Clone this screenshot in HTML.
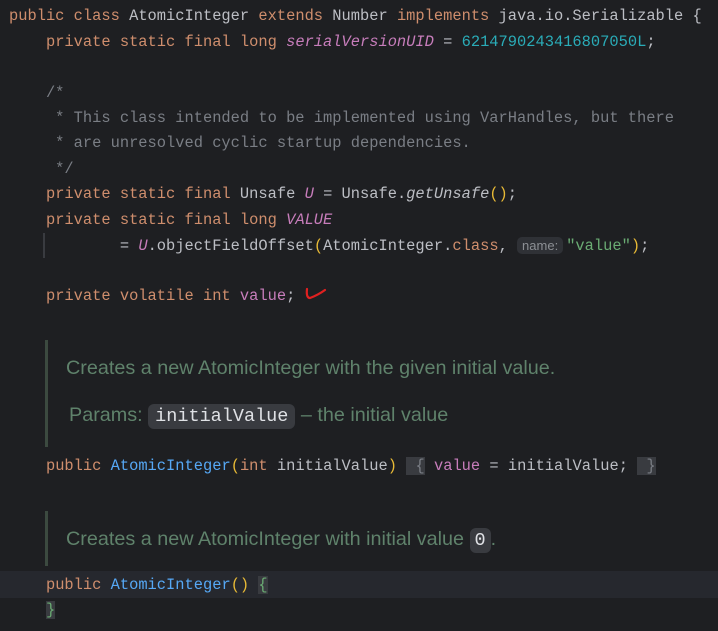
<!DOCTYPE html>
<html><head><meta charset="utf-8"><style>
body{margin:0;width:718px;height:631px;background:#1e1f22;overflow:hidden;position:relative;font-family:"Liberation Mono",monospace;font-size:15.4px;color:#bcbec4}
.l{position:absolute;left:9px;height:25px;line-height:25px;white-space:pre}
.k{color:#cf8e6d}.p{color:#c77dbb;font-style:italic}.n{color:#2aacb8}.c{color:#7a7e85}.s{color:#6aab73}.m{color:#56a8f5}.f{color:#c77dbb}.y{color:#e8ba36}.g{color:#6aab73}
.doc{position:absolute;left:45px;border-left:3px solid #3c4a40;font-family:"Liberation Sans",sans-serif;font-size:19.8px;color:#5f826b}
.pill{background:#393b40;border-radius:6px;padding:2px 7px;color:#dfe1e5;font-family:"Liberation Mono",monospace;font-size:18.5px}
.hint{background:#2f3136;border-radius:5px;color:#8c8f94;font-family:"Liberation Sans",sans-serif;font-size:13px;padding:1px 5px;margin-right:3px}
.bx{background:#393b40}
</style></head><body>
<div style="position:absolute;left:0;top:571px;width:718px;height:27px;background:#26282e"></div>
<div style="position:absolute;left:43px;top:233px;width:2px;height:25px;background:#393b40"></div>
<div class="l" style="top:4px"><span class="k">public class </span>AtomicInteger <span class="k">extends </span>Number <span class="k">implements </span>java.io.Serializable {</div>
<div class="l" style="top:30px">    <span class="k">private static final long </span><span class="p">serialVersionUID</span> = <span class="n">6214790243416807050L</span>;</div>
<div class="l c" style="top:81px">    /*</div>
<div class="l c" style="top:106px">     * This class intended to be implemented using VarHandles, but there</div>
<div class="l c" style="top:131px">     * are unresolved cyclic startup dependencies.</div>
<div class="l c" style="top:157px">     */</div>
<div class="l" style="top:182px">    <span class="k">private static final </span>Unsafe <span class="p">U</span> = Unsafe.<i>getUnsafe</i><span class="y">()</span>;</div>
<div class="l" style="top:208px">    <span class="k">private static final long </span><span class="p">VALUE</span></div>
<div class="l" style="top:233px">            = <span class="p">U</span>.objectFieldOffset<span class="y">(</span>AtomicInteger.<span class="k">class</span>, <span class="hint">name:</span><span class="s">"value"</span><span class="y">)</span>;</div>
<div class="l" style="top:284px">    <span class="k">private volatile int </span><span class="f">value</span>;</div>
<svg style="position:absolute;left:304px;top:286px" width="24" height="16"><path d="M3 3 Q2 12 6 12 Q14 9 21 4" stroke="#e02020" stroke-width="2.2" fill="none" stroke-linecap="round"/></svg>
<div class="doc" style="top:340px;height:107px">
<div style="position:absolute;left:18px;top:17px;white-space:nowrap">Creates a new AtomicInteger with the given initial value.</div>
<div style="position:absolute;left:21px;top:64px;white-space:nowrap">Params: <span class="pill">initialValue</span> – the initial value</div>
</div>
<div class="l" style="top:454px">    <span class="k">public </span><span class="m">AtomicInteger</span><span class="y">(</span><span class="k">int </span>initialValue<span class="y">)</span> <span class="bx" style="color:#7a7e85"> {</span> <span class="f">value</span> = initialValue; <span class="bx" style="color:#7a7e85"> }</span></div>
<div class="doc" style="top:511px;height:55px">
<div style="position:absolute;left:18px;top:17px;white-space:nowrap">Creates a new AtomicInteger with initial value <span class="pill" style="padding:2px 5px">0</span>.</div>
</div>
<div class="l" style="top:573px">    <span class="k">public </span><span class="m">AtomicInteger</span><span class="y">()</span> <span class="g bx">{</span></div>
<div class="l" style="top:598px">    <span class="g bx">}</span></div>
</body></html>
